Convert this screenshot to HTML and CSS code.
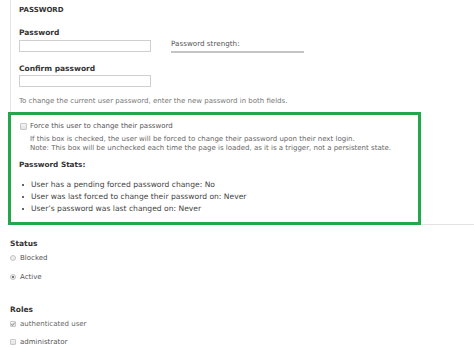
FILE: index.html
```html
<!DOCTYPE html>
<html>
<head>
<meta charset="utf-8">
<link rel="stylesheet" href="styles.css">
</head>
<body>
<div class="page">
  <section class="fieldset">
    <div class="legend">PASSWORD</div>
    <div class="pw-row">
      <div class="field">
        <div class="label first">Password</div>
        <div class="input"></div>
      </div>
      <div class="strength">
        <div class="strength-text">Password strength:</div>
        <div class="bar"></div>
      </div>
    </div>
    <div class="field">
      <div class="label second">Confirm password</div>
      <div class="input input2"></div>
    </div>
    <p class="help">To change the current user password, enter the new password in both fields.</p>
    <div class="highlight">
      <div class="check-row">
        <span class="box"></span>
        <span class="check-label">Force this user to change their password</span>
      </div>
      <div class="desc">
        <div>If this box is checked, the user will be forced to change their password upon their next login.</div>
        <div>Note: This box will be unchecked each time the page is loaded, as it is a trigger, not a persistent state.</div>
      </div>
      <div class="stats-title">Password Stats:</div>
      <ul class="stats">
        <li>User has a pending forced password change: No</li>
        <li>User was last forced to change their password on: Never</li>
        <li>User’s password was last changed on: Never</li>
      </ul>
    </div>
  </section>

  <div class="group status">
    <div class="group-title">Status</div>
    <div class="opt opt-blocked"><span class="radio"></span><span>Blocked</span></div>
    <div class="opt opt-active"><span class="radio on"></span><span>Active</span></div>
  </div>

  <div class="group roles">
    <div class="group-title">Roles</div>
    <div class="opt opt-auth"><span class="box small checked">
      <svg viewBox="0 0 6 6" width="6" height="6"><path d="M1.2 3.2 L2.4 4.4 L4.8 1.6" fill="none" stroke="#777" stroke-width="0.9"/></svg>
    </span><span class="muted">authenticated user</span></div>
    <div class="opt opt-admin"><span class="box small"></span><span>administrator</span></div>
  </div>
</div>
</body>
</html>
```

FILE: styles.css
```css
* { box-sizing: border-box; }
html, body { margin: 0; padding: 0; background: #fff; }
body {
  font-family: "DejaVu Sans", Verdana, sans-serif;
  color: #333;
  width: 474px;
  height: 350px;
  overflow: hidden;
}
.page { padding-top: 0; }

.fieldset {
  margin-left: 10px;
  border-left: 1px solid #e3e3e3;
  border-bottom: 1px solid #e3e3e3;
  padding-left: 8px;
}
.legend {
  font-size: 7px;
  font-weight: bold;
  line-height: 12px;
  padding-top: 4px;
  color: #333;
}
.pw-row { display: flex; align-items: flex-start; }
.label {
  font-size: 7.5px;
  font-weight: bold;
  line-height: 10px;
  color: #333;
}
.label.first { margin-top: 12px; }
.label.second { margin-top: 11px; }
.input {
  width: 132px;
  height: 12px;
  border: 1px solid #cfcfcf;
  margin-top: 2px;
  background: #fff;
}
.input2 { margin-top: 1px; }
.strength { margin-left: 20px; margin-top: 23px; }
.strength-text {
  font-size: 7.2px;
  line-height: 10px;
  color: #555;
}
.bar {
  width: 133px;
  height: 2px;
  background: #c4c4c4;
  margin-top: 2px;
}
.help {
  margin: 9px 0 0;
  font-size: 7px;
  line-height: 10px;
  color: #777;
}

.highlight {
  margin: 6px 0 -1px -11px;
  width: 413px;
  border: 3px solid #22a84a;
  padding: 6px 8px 7px 8px;
}
.check-row {
  display: flex;
  align-items: center;
  height: 10px;
  padding-left: 1px;
}
.box {
  display: inline-block;
  width: 7px;
  height: 7px;
  border: 1px solid #c8c8c8;
  border-radius: 1px;
  background: linear-gradient(#f4f4f4, #e2e2e2);
  flex: none;
}
.check-label {
  margin-left: 3px;
  font-size: 7px;
  line-height: 10px;
  color: #555;
}
.desc {
  margin-top: 4px;
  padding-left: 11px;
  font-size: 7px;
  line-height: 9px;
  color: #666;
  white-space: nowrap;
}
.stats-title {
  margin-top: 7px;
  font-size: 7.3px;
  font-weight: bold;
  line-height: 10px;
  color: #333;
}
.stats {
  list-style: none;
  margin: 9px 0 0;
  padding: 0;
}
.stats li {
  position: relative;
  padding-left: 12px;
  font-size: 7.6px;
  line-height: 12px;
  color: #444;
}
.stats li::before {
  content: "";
  position: absolute;
  left: 3px;
  top: 5px;
  width: 2.4px;
  height: 2.4px;
  border-radius: 50%;
  background: #333;
}

.group { margin-left: 10px; }
.group-title {
  font-size: 7.5px;
  font-weight: bold;
  line-height: 10px;
  color: #333;
}
.status { margin-top: 14px; }
.roles { margin-top: 23px; }
.opt {
  display: flex;
  align-items: center;
  height: 10px;
  font-size: 7px;
  color: #555;
}
.opt span + span { margin-left: 4px; }
.opt-blocked { margin-top: 4px; }
.opt-active { margin-top: 9px; }
.opt-auth { margin-top: 4px; }
.opt-admin { margin-top: 8px; }
.radio {
  display: inline-block;
  width: 6px;
  height: 6px;
  border-radius: 50%;
  border: 1px solid #c4c4c4;
  background: #ececec;
  position: relative;
  flex: none;
}
.radio.on::after {
  content: "";
  position: absolute;
  left: 1px; top: 1px;
  width: 2px; height: 2px;
  border-radius: 50%;
  background: #555;
}
.box.small {
  width: 6px;
  height: 6px;
  position: relative;
  display: inline-flex;
}
.box.small svg { position: absolute; left: -1px; top: -1px; }
.muted { color: #666; }
```
